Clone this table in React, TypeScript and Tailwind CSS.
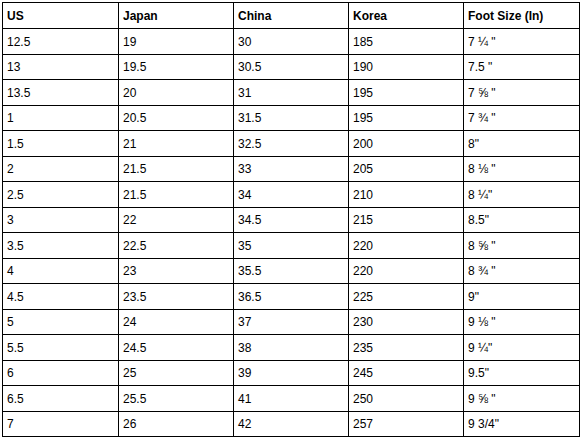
const header = ['US', 'Japan', 'China', 'Korea', 'Foot Size (In)'];

const rows: string[][] = [
  ['12.5', '19', '30', '185', '7 ¼ "'],
  ['13', '19.5', '30.5', '190', '7.5 "'],
  ['13.5', '20', '31', '195', '7 ⅝ "'],
  ['1', '20.5', '31.5', '195', '7 ¾ "'],
  ['1.5', '21', '32.5', '200', '8"'],
  ['2', '21.5', '33', '205', '8 ⅛ "'],
  ['2.5', '21.5', '34', '210', '8 ¼"'],
  ['3', '22', '34.5', '215', '8.5"'],
  ['3.5', '22.5', '35', '220', '8 ⅝ "'],
  ['4', '23', '35.5', '220', '8 ¾ "'],
  ['4.5', '23.5', '36.5', '225', '9"'],
  ['5', '24', '37', '230', '9 ⅛ "'],
  ['5.5', '24.5', '38', '235', '9 ¼"'],
  ['6', '25', '39', '245', '9.5"'],
  ['6.5', '25.5', '41', '250', '9 ⅝ "'],
  ['7', '26', '42', '257', '9 3/4"'],
];

const widths = ['w-[116px]', 'w-[115px]', 'w-[115px]', 'w-[115px]', 'w-[116px]'];

export default function App() {
  return (
    <div className="bg-white w-[582px] h-[441px] p-[2px] font-['Liberation_Sans',Arial,sans-serif] text-[12px] text-black">
      <table className="table-fixed border-collapse w-[577px]">
        <colgroup>
          {widths.map((w, i) => (
            <col key={i} className={w} />
          ))}
        </colgroup>
        <thead>
          <tr className="h-[26px]">
            {header.map((h) => (
              <th key={h} className="border border-black text-left font-bold pl-[4px] align-middle">
                {h}
              </th>
            ))}
          </tr>
        </thead>
        <tbody>
          {rows.map((r, i) => (
            <tr key={i} className={i % 2 === 0 ? 'h-[26px]' : 'h-[25px]'}>
              {r.map((c, j) => (
                <td key={j} className="border border-black pl-[4px] align-middle">
                  {c}
                </td>
              ))}
            </tr>
          ))}
        </tbody>
      </table>
    </div>
  );
}
